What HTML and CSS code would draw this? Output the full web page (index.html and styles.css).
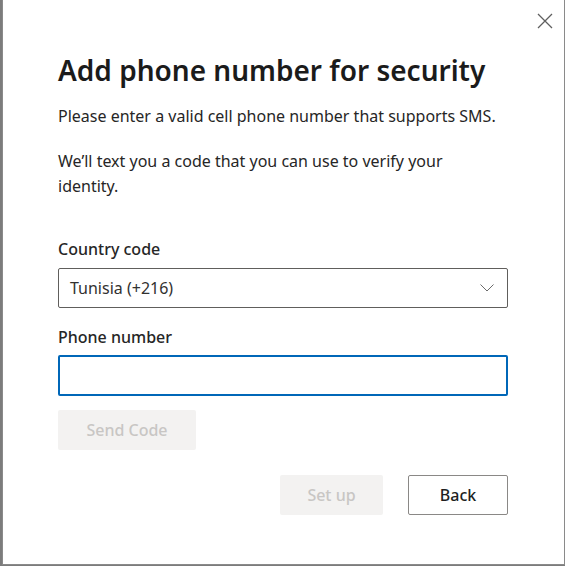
FILE: index.html
```html
<!DOCTYPE html>
<html lang="en">
<head>
  <meta charset="UTF-8">
  <meta name="viewport" content="width=device-width, initial-scale=1.0">
  <title>Add phone number</title>
  <link rel="stylesheet" href="styles.css">
</head>
<body>
  <div class="backdrop">
    <div class="dialog">
      <button class="close" aria-label="Close">
        <svg width="16" height="16" viewBox="0 0 16 16"><path d="M1 1 L15 15 M15 1 L1 15" stroke="#5f5f5f" stroke-width="1.3" fill="none"/></svg>
      </button>
      <h1>Add phone number for security</h1>
      <p class="intro">Please enter a valid cell phone number that supports SMS.</p>
      <p class="intro second">We’ll text you a code that you can use to verify your identity.</p>

      <label class="field-label first">Country code</label>
      <div class="select">
        <span>Tunisia (+216)</span>
        <svg width="14" height="8" viewBox="0 0 14 8"><path d="M0.5 0.5 L7 7 L13.5 0.5" stroke="#6b6b6b" stroke-width="1" fill="none"/></svg>
      </div>

      <label class="field-label">Phone number</label>
      <div class="input"></div>

      <div class="send-row">
        <button class="btn disabled">Send Code</button>
      </div>

      <div class="actions">
        <button class="btn disabled setup">Set up</button>
        <button class="btn back">Back</button>
      </div>
    </div>
  </div>
</body>
</html>
```

FILE: styles.css
```css
body {
  margin: 0;
  background: #7c7c7c;
  font-family: "Noto Sans", "Open Sans", sans-serif;
  color: #201f1e;
  overflow: hidden;
}
.backdrop {
  height: 566px;
  padding-left: 2px;
}
.dialog {
  position: relative;
  box-sizing: border-box;
  width: 563px;
  height: 565px;
  background: #fff;
  border: 1px solid #8a8a8a;
  border-top: none;
  padding: 48px 0 0 55px;
}
.close {
  position: absolute;
  top: 13px;
  right: 11px;
  background: none;
  border: none;
  padding: 0;
  cursor: pointer;
}
h1 {
  margin: 0;
  font-size: 28px;
  font-weight: 600;
  color: #1b1b1b;
  line-height: 44px;
}
.intro {
  margin: 12px 0 0;
  font-size: 16px;
  line-height: 25px;
  color: #262626;
  width: 445px;
}
.intro.second {
  margin-top: 20px;
}
.field-label {
  display: block;
  margin-top: 17px;
  font-size: 16px;
  font-weight: 500;
  line-height: 24px;
  color: #262626;
}
.field-label.first {
  margin-top: 38px;
}
.select {
  margin-top: 7px;
  width: 450px;
  height: 40px;
  box-sizing: border-box;
  border: 1px solid #605e5c;
  border-radius: 2px;
  display: flex;
  align-items: center;
  justify-content: space-between;
  padding: 0 13px 0 11px;
  font-size: 16px;
  color: #323130;
}
.input {
  margin-top: 6px;
  width: 450px;
  height: 41px;
  box-sizing: border-box;
  border: 2px solid #0067b8;
  border-radius: 2px;
}
.send-row {
  margin-top: 14px;
}
.btn {
  font-family: inherit;
  font-size: 16px;
  font-weight: 500;
  height: 40px;
  border-radius: 2px;
  cursor: pointer;
}
.btn.disabled {
  background: #f3f2f1;
  color: #c8c6c4;
  border: none;
  width: 138px;
}
.actions {
  margin-top: 25px;
  width: 450px;
  display: flex;
  justify-content: flex-end;
  gap: 25px;
}
.btn.setup {
  width: 103px;
}
.btn.back {
  width: 100px;
  background: #fff;
  border: 1px solid #8a8886;
  color: #201f1e;
}
```
